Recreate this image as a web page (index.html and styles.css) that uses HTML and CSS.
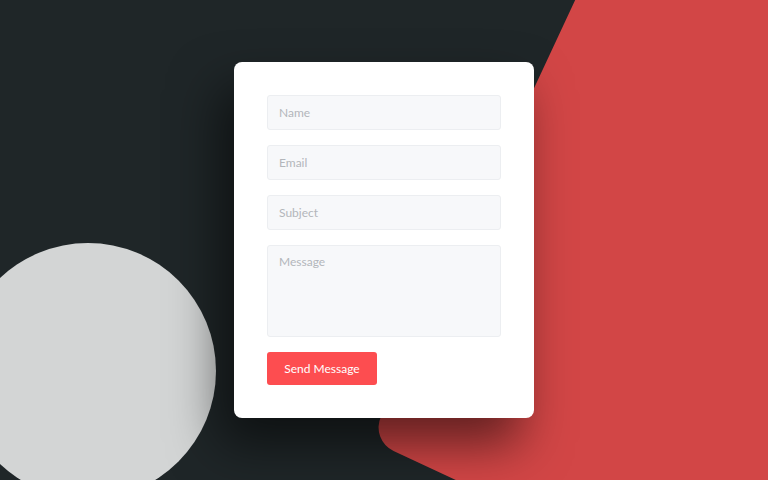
FILE: index.html
```html
<!DOCTYPE html>
<html lang="en">
<head>
    <meta charset="UTF-8">
    <meta name="viewport" content="width=device-width, initial-scale=1.0">
    <title>Contact</title>
    <link rel="stylesheet" href="styles.css">
</head>
<body>
    <div class="backdrop">
        <div class="blob-red"></div>
        <div class="blob-grey"></div>
    </div>

    <form class="contact-card">
        <input class="field" type="text" placeholder="Name">
        <input class="field" type="email" placeholder="Email">
        <input class="field" type="text" placeholder="Subject">
        <textarea class="field field-message" placeholder="Message"></textarea>
        <button class="send-btn" type="button">Send Message</button>
    </form>
</body>
</html>
```

FILE: styles.css
```css
html, body {
    height: 100%;
}
body {
    margin: 0;
    font-family: 'Lato', 'Open Sans', sans-serif;
    background: #1f2628;
    display: flex;
    justify-content: center;
    align-items: center;
    overflow: hidden;
    position: relative;
}

/* decorative shapes behind the card */
.backdrop {
    position: absolute;
    inset: 0;
    overflow: hidden;
}
.blob-red {
    position: absolute;
    left: 370px;
    top: -560px;
    width: 800px;
    height: 1000px;
    background: #d24646;
    border-radius: 26px;
    transform-origin: bottom left;
    transform: rotate(25deg);
}
.blob-grey {
    position: absolute;
    left: -40px;
    top: 243px;
    width: 256px;
    height: 256px;
    border-radius: 50%;
    background: #d3d5d5;
}

.contact-card {
    position: relative;
    width: 300px;
    box-sizing: border-box;
    padding: 33px;
    background: #fff;
    border-radius: 8px;
    box-shadow: -14px 26px 50px rgba(0, 0, 0, 0.55);
    display: flex;
    flex-direction: column;
    gap: 15px;
}

.field {
    display: block;
    width: 100%;
    height: 35px;
    box-sizing: border-box;
    padding: 0 11px;
    border: 1px solid #eceef1;
    border-radius: 3px;
    background: #f7f8fa;
    font-family: inherit;
    font-size: 12px;
    color: #555;
    outline: none;
}
.field::placeholder {
    color: #b3b6bb;
}
.field-message {
    height: 92px;
    padding-top: 8px;
    resize: none;
}

.send-btn {
    align-self: flex-start;
    width: 110px;
    height: 33px;
    border: none;
    border-radius: 3px;
    background: #fd4d50;
    color: #fff;
    font-family: inherit;
    font-size: 12px;
    cursor: pointer;
}
.send-btn:hover {
    background: #e8393c;
}
```
